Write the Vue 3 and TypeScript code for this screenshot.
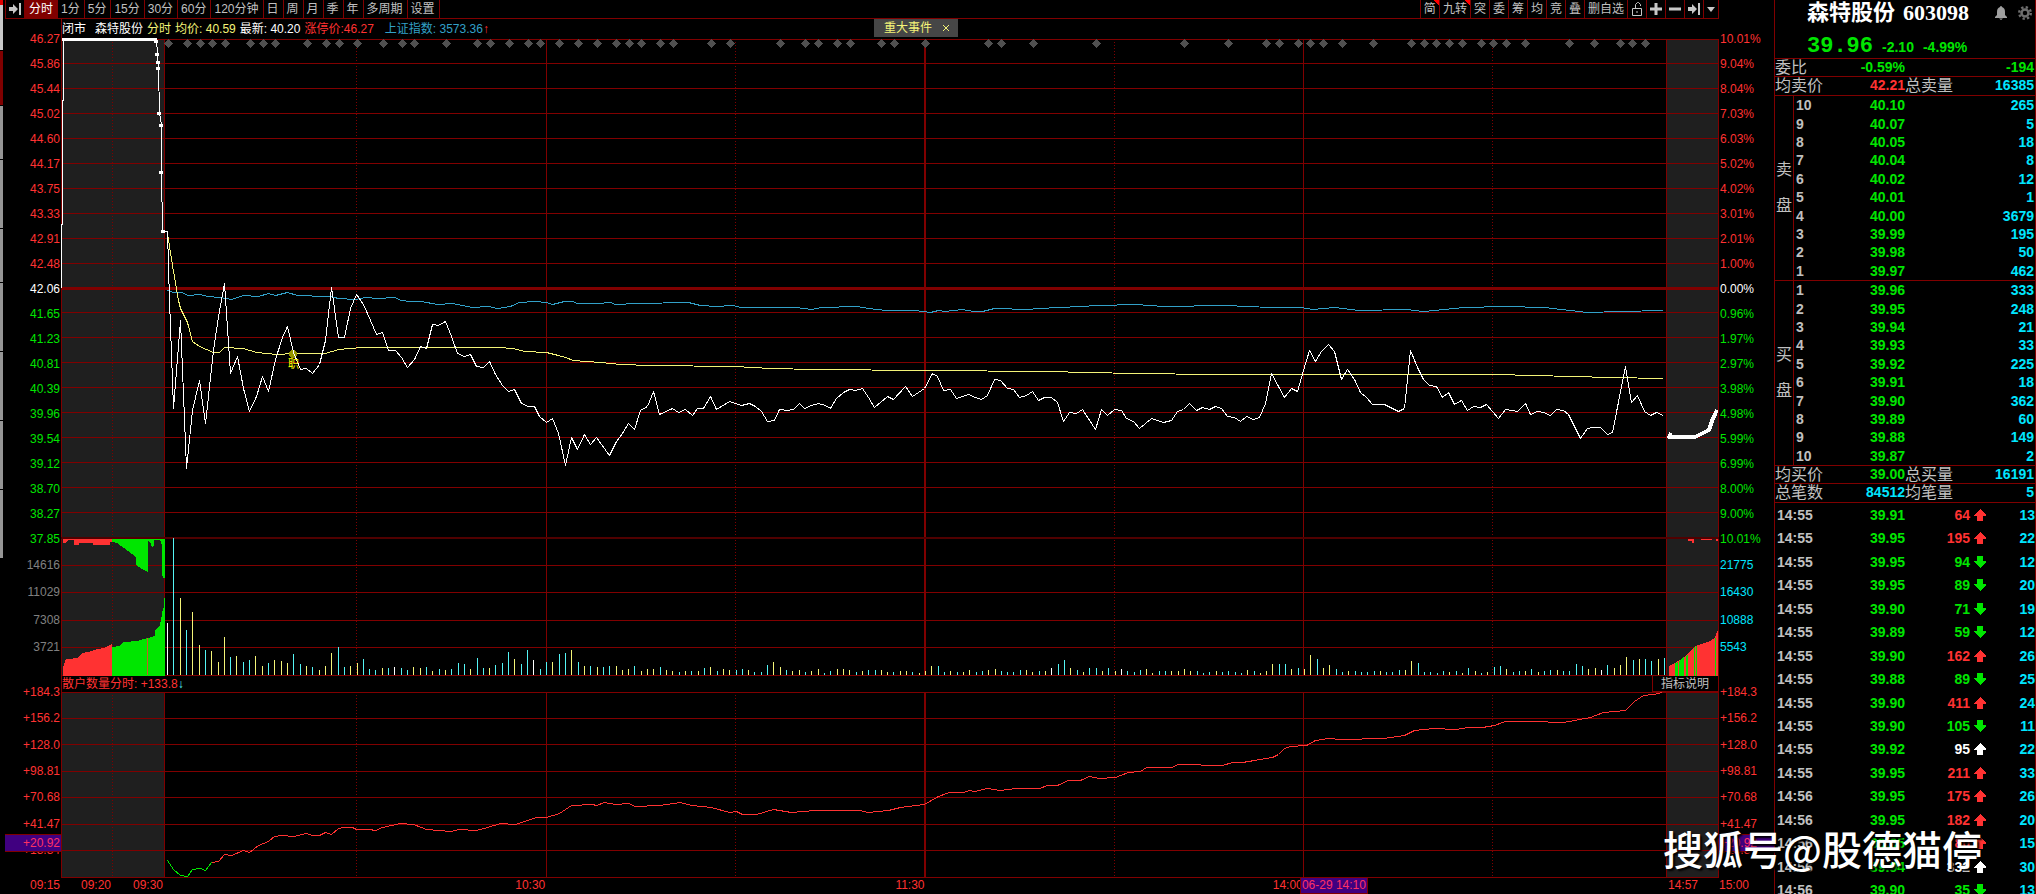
<script setup lang="ts">
interface Level { rank: number; price: string; volume: number }
interface Tick { time: string; price: string; volume: number; tone: string; dir: string; count: number }

const periods = ['分时', '1分', '5分', '15分', '30分', '60分', '120分钟', '日', '周', '月', '季', '年', '多周期', '设置']
const tools = ['简', '九转', '突', '委', '筹', '均', '竞', '叠', '删自选']

const prices = ['46.27', '45.86', '45.44', '45.02', '44.60', '44.17', '43.75', '43.33', '42.91', '42.48', '42.06',
  '41.65', '41.23', '40.81', '40.39', '39.96', '39.54', '39.12', '38.70', '38.27', '37.85']
const percents = ['10.01%', '9.04%', '8.04%', '7.03%', '6.03%', '5.02%', '4.02%', '3.01%', '2.01%', '1.00%', '0.00%',
  '0.96%', '1.97%', '2.97%', '3.98%', '4.98%', '5.99%', '6.99%', '8.00%', '9.00%', '10.01%']
const tone = (i: number) => (i < 10 ? 'red' : i === 10 ? 'white' : 'green')
const leftVolumes = ['14616', '11029', '7308', '3721']
const rightVolumes = ['21775', '16430', '10888', '5543']
const subLabels = ['+184.3', '+156.2', '+128.0', '+98.81', '+70.68', '+41.47', '+13.34']
const times = ['09:15', '09:20', '09:30', '10:30', '11:30', '14:00']

const priceGrid = [39, 63, 88, 113, 138, 163, 188, 213, 238, 263, 312, 337, 362, 387, 412, 437, 462, 487, 512,
  565, 592, 620, 647, 675]
const subGrid = [692, 718, 744, 771, 797, 824, 850, 877]
const solid = [61, 164, 546, 1303, 1666, 1718]
const dotted = [112, 356, 735, 1114, 1492]

const events = [168, 187, 200, 212, 225, 250, 263, 275, 307, 326, 339, 357, 383, 402, 414, 446, 477, 490, 509, 528,
  540, 559, 578, 597, 616, 629, 641, 660, 673, 711, 730, 780, 805, 818, 837, 850, 881, 894, 925, 988, 1001, 1033,
  1096, 1184, 1228, 1266, 1279, 1298, 1310, 1323, 1342, 1373, 1411, 1424, 1436, 1449, 1462, 1481, 1493, 1506,
  1525, 1569, 1594, 1620, 1632, 1645]

const priceLine = '162,231 167,231 169,300 173,408 180,320 186,468 192,410 199,380 205,423 213,350 218,316 224,283 230,373 237,356 243,388 249,411 256,396 262,376 268,391 275,359 282,337 287,326 293,352 300,369 306,368 312,373 319,364 325,340 331,287 338,337 344,337 350,308 356,294 363,304 370,320 376,334 382,332 388,350 395,350 401,357 407,367 414,359 420,346 426,348 432,324 438,325 445,321 451,336 457,353 464,356 470,354 476,366 483,367 489,361 495,374 502,385 508,391 514,389 521,403 528,406 534,406 539,416 546,422 552,418 558,433 565,465 571,437 577,449 584,434 590,444 596,437 609,455 616,441 622,433 628,423 634,429 640,410 647,406 653,391 659,414 672,408 678,412 685,409 692,415 697,408 703,408 710,396 716,409 729,401 741,405 749,403 755,406 761,411 767,421 774,420 779,409 787,410 793,409 799,403 804,408 811,405 818,403 825,405 830,408 836,398 843,392 849,389 855,390 862,388 868,397 874,407 887,396 893,399 905,386 912,396 924,388 932,373 937,376 943,390 950,389 956,398 968,394 975,397 981,399 987,395 994,379 1000,380 1007,388 1013,389 1019,397 1026,395 1032,391 1038,400 1044,397 1051,397 1057,402 1063,421 1069,412 1076,413 1082,409 1095,429 1101,409 1107,415 1114,409 1121,410 1126,418 1133,421 1139,428 1151,418 1163,422 1171,420 1177,411 1183,409 1189,403 1196,410 1202,407 1209,409 1215,406 1221,408 1227,416 1234,417 1240,421 1246,416 1253,419 1259,417 1265,403 1271,373 1278,386 1284,397 1291,388 1297,391 1303,370 1309,350 1315,361 1321,351 1328,344 1334,351 1341,379 1347,369 1354,379 1360,392 1366,397 1372,404 1384,404 1398,411 1404,408 1410,350 1417,367 1423,379 1429,385 1436,386 1442,397 1448,392 1454,404 1461,400 1467,410 1473,406 1480,407 1486,404 1492,411 1498,418 1505,409 1517,411 1525,403 1530,414 1537,411 1543,412 1550,415 1556,409 1563,410 1568,414 1580,438 1587,428 1593,427 1600,427 1607,434 1612,432 1625,366 1631,402 1637,395 1644,411 1650,415 1656,412 1663,415'
const averageLine = '167,233 172,265 178,300 180,308 187,322 192,341 199,346 213,352 219,352 224,347 243,348 256,352 277,354 293,353 325,353 338,349 362,347 498,347 512,348 525,351 546,352 558,355 565,357 573,360 600,362 620,364 650,365 735,366 770,368 815,369 925,370 1048,371 1086,372 1137,373 1212,374 1495,374 1572,376 1610,377 1663,378'
const indexLine = '167,290 173,292 182,292 187,295 200,294 207,296 220,297 231,299 243,295 258,296 268,293 275,295 287,292 297,295 308,295 315,296 330,296 338,298 355,299 365,297 377,298 395,297 400,300 410,301 421,301 437,304 452,303 472,307 488,306 497,308 510,306 519,302 534,301 546,302 552,304 564,301 572,301 577,303 598,303 610,302 615,304 637,303 688,302 700,305 716,306 732,305 741,307 796,307 811,309 821,307 857,306 868,308 886,310 914,310 930,312 938,310 944,311 962,309 973,311 982,311 994,308 1028,309 1038,308 1060,307 1098,305 1136,304 1163,306 1225,305 1270,307 1301,307 1312,309 1334,307 1359,310 1406,309 1423,311 1464,307 1504,306 1544,307 1587,312 1620,311 1663,310'
const subStart = '167,860 173,869 180,875 187,876 192,869 200,868 205,870 211,862'
const subLine = '211,862 218,861 224,854 231,855 243,850 249,852 258,845 268,841 274,836 282,835 293,836 306,833 312,835 319,835 325,832 331,834 338,828 344,827 352,827 356,829 369,829 375,830 382,827 400,823 413,824 426,829 451,831 458,829 476,830 487,827 500,823 515,824 536,817 546,817 559,813 571,805 592,804 596,805 604,802 615,804 629,803 634,806 659,805 680,802 691,805 711,807 729,812 736,811 742,814 756,814 773,809 791,812 815,810 859,810 868,812 888,810 900,807 924,804 938,796 949,792 963,792 969,790 974,791 987,788 1000,790 1016,788 1039,788 1047,785 1057,785 1068,780 1080,780 1089,776 1099,778 1115,777 1128,772 1140,771 1146,767 1171,767 1178,764 1222,765 1232,762 1242,762 1272,757 1278,754 1284,748 1290,746 1306,745 1315,740 1328,738 1341,739 1383,738 1404,735 1414,730 1433,728 1456,729 1467,727 1482,727 1494,725 1505,721 1532,721 1563,722 1590,717 1603,712 1625,710 1634,701 1643,695 1653,694 1662,692'

const barInk: Record<string, string> = { W: '#ffffff', C: '#54f4f4', Y: '#f4f478' }
// One entry per traded minute: colour key followed by bar height.
const bars = ('W52 C137 Y77 C45 Y63 Y30 C25 Y24 Y13 Y38 C18 Y19 C13 C15 Y19 Y9 C12 Y15 Y14 Y12 C21 C11 Y9 C8 Y5 Y9 Y22 C28 C8 Y9 ' +
  'Y12 C16 C6 C5 Y7 C7 W8 C7 C5 Y8 Y7 C8 Y4 C6 Y5 C6 C12 C11 Y6 C17 C7 Y7 C10 C12 C23 Y16 C11 C25 W15 C6 ' +
  'C13 Y13 C21 C22 Y25 C13 Y9 C9 Y8 C8 C9 Y9 Y5 Y6 C9 Y4 Y6 Y6 C8 Y5 Y4 C3 Y4 C4 Y4 C7 Y8 C4 Y6 Y5 ' +
  'C5 C6 Y5 C3 C3 C10 Y13 Y8 C5 Y4 Y5 C3 Y4 Y6 C2 C4 Y6 Y6 Y5 C3 Y4 C5 C5 Y5 Y3 C3 Y4 Y4 C3 Y2 ' +
  'Y4 Y9 C9 C3 Y4 C3 Y3 Y5 C3 C4 Y5 Y6 C4 C3 C3 C5 Y5 Y3 C4 Y4 W7 C11 C15 Y7 C5 Y3 C7 C7 Y4 C7 ' +
  'Y4 W6 C4 C3 C5 Y6 Y2 C4 C4 Y4 Y4 Y6 Y4 C4 C2 C3 Y4 C3 C4 C3 C2 Y5 C4 Y2 Y4 Y11 C11 C11 Y6 C7 ' +
  'Y6 Y20 C16 Y7 Y10 C6 C3 Y4 C4 C3 C3 C4 Y4 C3 C3 C5 Y5 Y14 C12 C3 C3 C2 C4 Y3 C4 Y2 C7 Y4 C2 Y3 ' +
  'C8 C9 Y6 C3 C4 Y4 C6 Y3 C4 C5 Y5 C4 C4 C11 C9 Y6 Y7 W5 C10 Y7 Y10 Y18 C15 Y16 C16 C14 Y16 C17')
  .split(' ')
  .map((s, i) => ({ x: Math.floor(167.5 + i * 6.317), h: Number(s.slice(1)), fill: barInk[s[0]] }))

const openDots = [[156, 41], [157, 54], [158, 62], [158, 68], [159, 113], [161, 125], [161, 172], [163, 231]]

const sells: Level[] = [
  { rank: 10, price: '40.10', volume: 265 }, { rank: 9, price: '40.07', volume: 5 },
  { rank: 8, price: '40.05', volume: 18 }, { rank: 7, price: '40.04', volume: 8 },
  { rank: 6, price: '40.02', volume: 12 }, { rank: 5, price: '40.01', volume: 1 },
  { rank: 4, price: '40.00', volume: 3679 }, { rank: 3, price: '39.99', volume: 195 },
  { rank: 2, price: '39.98', volume: 50 }, { rank: 1, price: '39.97', volume: 462 },
]
const buys: Level[] = [
  { rank: 1, price: '39.96', volume: 333 }, { rank: 2, price: '39.95', volume: 248 },
  { rank: 3, price: '39.94', volume: 21 }, { rank: 4, price: '39.93', volume: 33 },
  { rank: 5, price: '39.92', volume: 225 }, { rank: 6, price: '39.91', volume: 18 },
  { rank: 7, price: '39.90', volume: 362 }, { rank: 8, price: '39.89', volume: 60 },
  { rank: 9, price: '39.88', volume: 149 }, { rank: 10, price: '39.87', volume: 2 },
]
const books = [{ side: '卖', levels: sells }, { side: '买', levels: buys }]

const t = (time: string, price: string, volume: number, tone: string, dir: string, count: number): Tick =>
  ({ time, price, volume, tone, dir, count })
const ticks: Tick[] = [
  t('14:55', '39.91', 64, 'red', 'up', 13), t('14:55', '39.95', 195, 'red', 'up', 22),
  t('14:55', '39.95', 94, 'green', 'down', 12), t('14:55', '39.95', 89, 'green', 'down', 20),
  t('14:55', '39.90', 71, 'green', 'down', 19), t('14:55', '39.89', 59, 'green', 'down', 12),
  t('14:55', '39.90', 162, 'red', 'up', 26), t('14:55', '39.88', 89, 'green', 'down', 25),
  t('14:55', '39.90', 411, 'red', 'up', 24), t('14:55', '39.90', 105, 'green', 'down', 11),
  t('14:55', '39.92', 95, 'white', 'up', 22), t('14:55', '39.95', 211, 'red', 'up', 33),
  t('14:56', '39.95', 175, 'red', 'up', 26), t('14:56', '39.95', 182, 'red', 'up', 20),
  t('14:56', '39.95', 80, 'red', 'up', 15), t('14:56', '39.94', 332, 'white', 'up', 30),
  t('14:56', '39.90', 35, 'green', 'down', 13),
]
</script>

<template>
  <div class="app">
    <div class="strip"><i class="s1"></i><i class="s2"></i><i v-for="n in 7" :key="n" :class="{ short: n === 1 || n === 3 }"></i></div>

    <main class="main">
      <nav class="toolbar">
        <button class="tool first" aria-label="展开">
          <svg width="12" height="12" viewBox="0 0 12 12"><path d="M0 4h4V1l5 5-5 5V8H0zM10 0h2v12h-2z" fill="#c8c8c8" /></svg>
        </button>
        <button v-for="(p, i) in periods" :key="p" class="tool" :class="{ active: i === 0 }">{{ p }}</button>
        <span class="spacer"></span>
        <button v-for="(p, i) in tools" :key="p" class="tool right" :class="{ corner: i < 2 }">{{ p }}</button>
        <button class="tool icon" aria-label="锁定">
          <svg width="12" height="16" viewBox="0 0 12 16"><path d="M1.500 7.500h9v7h-9zM4.500 7V3.500l2-2h1l2 2V5M6 10v2" fill="none" stroke="#c8c8c8" /></svg>
        </button>
        <button class="tool icon" aria-label="放大">
          <svg width="12" height="12" viewBox="0 0 12 12"><path d="M0 6h12M6 0v12" stroke="#c8c8c8" stroke-width="3" /></svg>
        </button>
        <button class="tool icon" aria-label="缩小">
          <svg width="12" height="12" viewBox="0 0 12 12"><path d="M0 6h12" stroke="#c8c8c8" stroke-width="3" /></svg>
        </button>
        <button class="tool icon" aria-label="末端">
          <svg width="12" height="12" viewBox="0 0 12 12"><path d="M0 4h4V1l5 5-5 5V8H0zM10 0h2v12h-2z" fill="#c8c8c8" /></svg>
        </button>
        <button class="tool menu" aria-label="更多">
          <svg width="8" height="5" viewBox="0 0 8 5"><path d="M0 0h8L4 5z" fill="#c8c8c8" /></svg>
        </button>
      </nav>

      <header class="info">
        <span class="white status">闭市</span><span class="white name">森特股份</span>
        <span class="yellow">分时</span><span class="yellow">均价: 40.59</span>
        <span class="white">最新: 40.20</span><span class="red limit">涨停价:46.27</span>
        <span class="blue">上证指数: 3573.36<b>↑</b></span>
        <button class="event">重大事件<svg width="8" height="8" viewBox="0 0 8 8"><path d="M1 1l6 6M7 1L1 7" stroke="#f4f478" /></svg></button>
      </header>

      <section class="body">
        <div class="axis left">
          <div class="scale price"><span v-for="(p, i) in prices" :key="p" :class="tone(i)">{{ p }}</span></div>
          <div class="scale volume grey"><span v-for="p in leftVolumes" :key="p">{{ p }}</span></div>
        </div>
        <svg class="plot price-plot" viewBox="61 38 1658 638" preserveAspectRatio="none" shape-rendering="crispEdges">
          <rect x="62" y="40" width="102" height="636" fill="#1f1f1f" />
          <rect x="1667" y="40" width="51" height="636" fill="#1f1f1f" />
          <g stroke="#800000">
            <line v-for="y in priceGrid" :key="y" x1="61" x2="1719" :y1="y + .5" :y2="y + .5" />
            <line v-for="x in solid" :key="x" :x1="x + .5" :x2="x + .5" y1="39" y2="676" />
            <line v-for="x in dotted" :key="x" :x1="x + .5" :x2="x + .5" y1="42" y2="676" stroke-dasharray="1 2" />
            <line x1="61.5" x2="61.5" y1="38" y2="40" />
            <line x1="925" x2="925" y1="39" y2="676" stroke-width="2" />
            <line x1="61" x2="1719" y1="288.5" y2="288.5" stroke-width="3" />
            <line x1="61" x2="1719" y1="538" y2="538" stroke-width="2" stroke="#500000" />
          </g>
          <path v-for="x in events" :key="x" :d="`M${x - 4} 43.500l4.500-4.500 4.500 4.500-4.500 4.500z`" fill="#505050" />

          <path d="M63 539h49v3h-2v3h-17v-2h-14v2h-5v-5h-6l-3 3h-2z" fill="#ff3232" />
          <path d="M112 539v3l5 1 7 5 8 6 4 4v7l6 4 6 3v-31l2 1 2 5 2-2v-5h6l2 5v28l1 5h2v-39z" fill="#00e600" />
          <path d="M63 676v-9l2-5 1-3h3l8-1 5-5 6-1 9-3 7-1 8-4v32z" fill="#ff3232" />
          <path d="M112 676v-29l7-1 5-4 13-1 11-3 7-2v-6l5-5 2-11 1-6h1v-10h1v78z" fill="#00e600" />
          <path d="M147.500 638v37" stroke="#c85a28" />
          <path d="M1669 676v-10l6-3 8-5 5-4 5-6 5-3 10-3 7-4 2-7h1v45z" fill="#ff3232" />
          <path d="M1675 676v-13l3-1v14zM1679 676v-15l5-4v19zM1686 676v-20l2-2v22zM1694 676v-29h1v29zM1696 676v-30h1v30zM1715 676v-38h1v38z" fill="#00e600" />
          <path d="M1688 539h6v4h-2v-2h-4zM1701 539h11v1h-11zM1716 539h2v2h-2z" fill="#ff3232" />

          <rect v-for="b in bars" :key="b.x" :x="b.x" :y="675 - b.h" width="1" :height="b.h" :fill="b.fill" />

          <g fill="none" stroke-linejoin="round">
            <polyline :points="indexLine" stroke="#32a0c8" transform="translate(0.5 0.5)" />
            <polyline :points="averageLine" stroke="#f4f478" transform="translate(0.5 0.5)" />
            <circle cx="293" cy="354" r="4" fill="#969600" />
            <polyline :points="priceLine" stroke="#ffffff" transform="translate(0.5 0.5)" />
            <path d="M61.500 288V225L62.500 224V100H63.500V40" stroke="#ffffff" />
            <path d="M62 39.500H157" stroke="#ffffff" stroke-width="3" />
            <path d="M156.500 40L158.500 68L159.500 113L161.500 125V172L162.500 231" stroke="#ffffff" />
            <path d="M1671 433L1669 437H1695L1701 434L1709 430L1712 421L1715 414L1717 410" stroke="#ffffff" stroke-width="4" />
          </g>
          <rect v-for="d in openDots" :key="d[1]" :x="d[0] - 2" :y="d[1] - 1" width="4" height="3" fill="#ffffff" />
          <text x="288" y="368" class="mark">职</text>
        </svg>
        <div class="axis rightside">
          <div class="scale price"><span v-for="(p, i) in percents" :key="i" :class="tone(i)">{{ p }}</span></div>
          <div class="scale volume cyan"><span v-for="p in rightVolumes" :key="p">{{ p }}</span></div>
        </div>
      </section>

      <div class="subtitle">
        <span class="red">散户数量分时: +133.8<b>↓</b></span>
        <button class="explain">指标说明</button>
      </div>

      <section class="body">
        <div class="axis left">
          <div class="scale sub red"><span v-for="p in subLabels" :key="p">{{ p }}</span></div>
          <div class="cursor">+20.92</div>
        </div>
        <svg class="plot sub-plot" viewBox="61 692 1658 186" preserveAspectRatio="none" shape-rendering="crispEdges">
          <rect x="62" y="692" width="102" height="186" fill="#1f1f1f" />
          <rect x="1667" y="692" width="51" height="186" fill="#1f1f1f" />
          <g stroke="#800000">
            <line v-for="y in subGrid" :key="y" x1="61" x2="1719" :y1="y + .5" :y2="y + .5" />
            <line v-for="x in solid" :key="x" :x1="x + .5" :x2="x + .5" y1="692" y2="878" />
            <line v-for="x in dotted" :key="x" :x1="x + .5" :x2="x + .5" y1="695" y2="878" stroke-dasharray="1 2" />
            <line x1="925" x2="925" y1="692" y2="878" stroke-width="2" />
          </g>
          <g fill="none" transform="translate(0.5 0.5)">
            <polyline :points="subLine" stroke="#ff3232" />
            <polyline :points="subStart" stroke="#00e600" />
          </g>
        </svg>
        <div class="axis rightside">
          <div class="scale sub red"><span v-for="p in subLabels" :key="p">{{ p }}</span></div>
          <div class="cursor">+20.92</div>
        </div>
      </section>

      <footer class="times">
        <span v-for="s in times" :key="s">{{ s }}</span>
        <span class="start">14:57</span><span class="start">15:00</span>
        <div class="stamp">06-29 14:10</div>
      </footer>
    </main>

    <aside class="quote">
      <header class="head">
        <h1><span>森特股份</span><span>603098</span></h1>
        <button class="bell" aria-label="提醒">
          <svg width="12" height="14" viewBox="0 0 12 14"><path d="M6 0c1 0 1 1 1 1 2 1 3 2 3 5v3l2 2v1H0v-1l2-2V6c0-3 1-4 3-5 0 0 0-1 1-1zM4 12.500h4L6 14z" fill="#a0a0a0" /></svg>
        </button>
        <button class="gear" aria-label="设置">
          <svg width="14" height="14" viewBox="0 0 14 14"><g fill="none" stroke="#6e6e6e"><circle cx="7" cy="7" r="3.500" stroke-width="2.500" /><circle cx="7" cy="7" r="5.800" stroke-width="2.400" stroke-dasharray="2.300 2.255" /></g></svg>
        </button>
      </header>
      <p class="last"><strong>39.96</strong><span>-2.10</span><span>-4.99%</span></p>

      <dl class="pair"><dt>委比</dt><dd class="green">-0.59%</dd><dt></dt><dd class="green">-194</dd></dl>
      <dl class="pair"><dt>均卖价</dt><dd class="red">42.21</dd><dt>总卖量</dt><dd class="cyan">16385</dd></dl>

      <section v-for="b in books" :key="b.side" class="book">
        <div class="side"><span>{{ b.side }}</span><span>盘</span></div>
        <table>
          <tbody>
            <tr v-for="l in b.levels" :key="l.rank">
              <td class="rank">{{ l.rank }}</td><td class="green at">{{ l.price }}</td><td class="cyan">{{ l.volume }}</td>
            </tr>
          </tbody>
        </table>
      </section>

      <dl class="pair"><dt>均买价</dt><dd class="green">39.00</dd><dt>总买量</dt><dd class="cyan">16191</dd></dl>
      <dl class="pair"><dt>总笔数</dt><dd class="cyan">84512</dd><dt>均笔量</dt><dd class="cyan">5</dd></dl>

      <table class="ticks">
        <tbody>
          <tr v-for="(k, i) in ticks" :key="i">
            <td class="when">{{ k.time }}</td>
            <td class="green deal">{{ k.price }}</td>
            <td class="lot" :class="k.tone">{{ k.volume }}</td>
            <td class="arrow" :class="k.tone">
              <svg width="12" height="12" viewBox="0 0 12 12" shape-rendering="crispEdges">
                <path :d="k.dir === 'up' ? 'M6 0l6 6v1H9v5H3V7H0V6z' : 'M6 12l6-6V5H9V0H3v5H0v1z'" fill="currentColor" />
              </svg>
            </td>
            <td class="cyan">{{ k.count }}</td>
          </tr>
        </tbody>
      </table>
    </aside>

    <div class="watermark">搜狐号@股德猫停</div>
  </div>
</template>

<style>
body { margin: 0; background: #000; }
</style>

<style scoped>
.app {
  position: relative; display: flex; height: 100vh; overflow: hidden; background: #000; color: #c0c0c0;
  font: 12px/16px "Liberation Sans", "Noto Sans CJK SC", sans-serif;
}
button { margin: 0; padding: 0; border: 0; background: none; color: inherit; font: inherit; }
svg { display: block; }
.red { color: #ff3232; }
.green { color: #00e600; }
.white { color: #fff; }
.grey { color: #808080; }
.cyan { color: #00e6ff; }
.yellow { color: #f4f478; }
.blue { color: #32a0c8; }

.strip { display: flex; flex-direction: column; gap: 1px; width: 3px; margin-right: 2px; flex: none; }
.strip i { height: 68px; background: #969696; }
.strip .s1 { height: 45px; background: #c8c8c8; border-top: 5px solid #e00000; }
.strip .s2 { height: 54px; background: #800000; }
.strip .short { height: 53px; }

.main { flex: 1; min-width: 0; }
.toolbar {
  display: flex; height: 18px; margin-right: 55px; border-bottom: 1px solid #800000; border-left: 1px solid #800000;
}
.tool {
  box-sizing: border-box; display: flex; align-items: center; padding: 0 4px 0 3px;
  border-right: 1px solid #800000; white-space: nowrap;
}
.tool.first { padding: 0 3px; }
.tool.active { background: #800000; color: #fff; padding: 0 4px; }
.spacer { flex: 1; border-right: 1px solid #800000; }
.tool.right { padding: 0 3px; }
.tool.icon { width: 19px; padding: 0 3px; }
.tool.menu { width: 15px; padding: 0 3px; }
.tool.corner { background: linear-gradient(225deg, #ff0000 4px, transparent 4px); }

.info {
  position: relative; display: flex; align-items: center; gap: 4px; height: 19px; margin: 0 55px 0 56px;
  border-left: 1px solid #800000; white-space: nowrap;
}
.info b, .subtitle b { font-weight: 400; color: #ff3232; }
.name { margin-left: 5px; }
.limit { margin-right: 7px; }
.event {
  position: absolute; left: 49%; top: 0; display: flex; align-items: center; gap: 10px; height: 18px;
  padding: 0 8px 0 10px; background: #464646; color: #f4f478;
}

.body { display: grid; grid-template-columns: 56px minmax(0, 1fr) 55px; }
.axis { position: relative; }
.scale { display: flex; flex-direction: column; justify-content: space-between; padding: 0 1px; }
.left .scale { text-align: right; }
.price { height: 523px; margin-top: -11px; line-height: 25px; }
.volume { height: 109px; margin-top: 2px; line-height: 27px; }
.sub { height: 184px; margin-top: -13px; line-height: 26px; }
.plot { width: 100%; }
.price-plot { height: 638px; }
.sub-plot { height: 186px; }
.mark { font-size: 11px; fill: #ffff00; }
.cursor {
  position: absolute; left: 0; right: 0; top: 142px; padding: 0 1px; background: #400080; color: #ff3264;
  border: 1px solid #800000; border-width: 1px 0; box-sizing: border-box; height: 18px;
}
.left .cursor { text-align: right; }

.subtitle {
  display: flex; justify-content: space-between; height: 16px; margin: 0 55px 0 56px;
  border-left: 1px solid #800000;
}
.subtitle b { color: #54f4f4; }
.explain {
  box-sizing: border-box; height: 16px; padding: 0 9px 0 8px; border: 1px solid #800000; border-top: 0; line-height: 16px;
}

.times {
  position: relative; display: grid; height: 16px; line-height: 14px; color: #ff3232; text-align: right;
  grid-template-columns: 56px 51fr 52fr 382fr 379fr 378fr 364fr 51fr 55px;
}
.times span { padding-right: 1px; }
.times .start { text-align: left; grid-column: 8; }
.times .start + .start { grid-column: 9; }
.stamp {
  position: absolute; left: 73.2%; top: 0; padding: 0 1px;
  background: #400080; color: #ff3264; border: 1px solid #800000; border-top: 0; line-height: 15px;
}

.quote {
  position: relative; box-sizing: border-box; flex: none; width: 262px; border: 1px solid #800000;
  border-width: 0 1px; font-weight: 700; font-size: 14px; line-height: 18px;
}
.head { display: flex; align-items: center; height: 26px; padding-left: 32px; }
.head h1 {
  display: flex; gap: 8px; flex: 1; margin: 0; color: #fff; white-space: nowrap;
  font: 700 22px/26px "Liberation Serif", "Noto Sans CJK SC", serif;
}
.bell { margin-right: 11px; }
.gear { margin-right: 3px; }
.last {
  display: flex; align-items: baseline; gap: 9px; height: 32px; margin: 0; padding-left: 32px; color: #00e600;
  line-height: 42px;
}
.last strong { font: 700 22px/42px "Liberation Mono", monospace; }
.pair {
  display: grid; grid-template-columns: 64px 66px 64px 1fr; height: 17px; margin: 0; border-top: 1px solid #800000;
  text-align: right; padding-right: 1px; line-height: 17px;
}
.pair dt { text-align: left; font-weight: 400; font-size: 16px; white-space: nowrap; }
.pair dd { margin: 0; }
.book { display: flex; height: 184px; border-top: 1px solid #800000; }
.side {
  display: flex; flex-direction: column; justify-content: center; gap: 18px; width: 18px; flex: none;
  border-right: 1px solid #800000; font-size: 16px; font-weight: 400; text-align: center;
}
.pair + .pair { height: 18px; }
table { flex: 1; width: 100%; border-collapse: collapse; }
td { padding: 0; text-align: right; }
.rank { width: 30px; padding-left: 2px; text-align: left; }
.at { width: 79px; }
.book td:last-child { padding-right: 1px; }
.ticks { height: 400px; border-top: 1px solid #800000; table-layout: fixed; }
.when { width: 60px; padding-left: 2px; text-align: left; }
.deal { width: 68px; }
.lot { width: 65px; }
.arrow { width: 12px; padding-left: 4px; }

.watermark {
  position: absolute; right: 54px; bottom: 22px; color: #fff; font: 500 40px/48px "Noto Sans CJK SC", sans-serif;
  text-shadow: 2px 2px 2px #000; white-space: nowrap;
}
</style>
